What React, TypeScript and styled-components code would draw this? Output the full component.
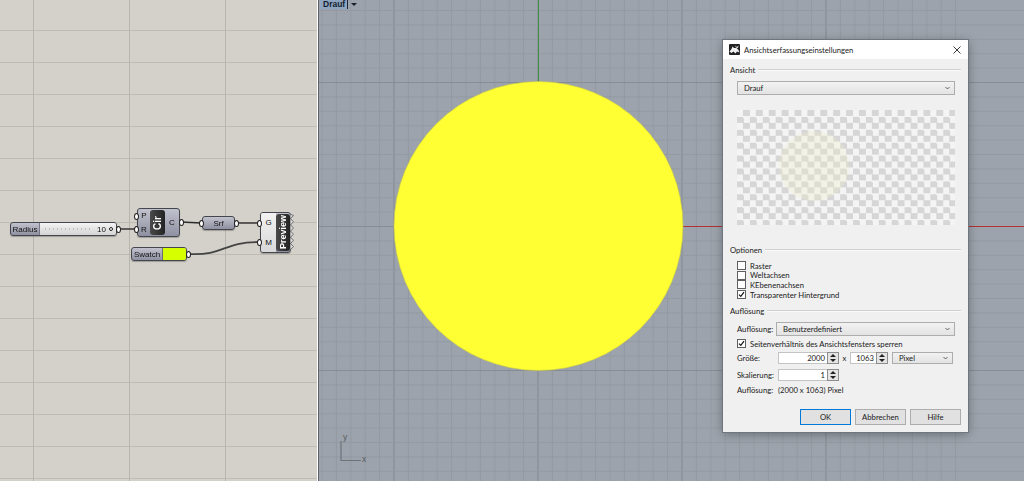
import React from 'react';
import styled, { createGlobalStyle } from 'styled-components';

const GlobalStyle = createGlobalStyle`
  html, body { margin: 0; padding: 0; width: 1024px; height: 481px; overflow: hidden; }
  body { font-family: Lato, "Liberation Sans", sans-serif; color: #1a1a1a; }
`;

const Page = styled.div`
  display: flex;
  width: 1024px;
  height: 481px;
  overflow: hidden;
  filter: blur(0.3px);
`;

/* ---------- grasshopper canvas ---------- */

const Canvas = styled.div`
  position: relative;
  flex: 0 0 317px;
  height: 481px;
  background-color: #d4d1ca;
  background-image:
    linear-gradient(90deg, #b7b5ad 1px, transparent 1px),
    linear-gradient(0deg, #bfbcb4 1px, transparent 1px);
  background-size: 96px 100%, 100% 32px;
  background-position: 33px 0, 0 -1px;
  border-right: 1px solid #ffffff;
  box-shadow: 1px 0 0 #5d6166;
  z-index: 1;
`;

const Wires = styled.svg`
  position: absolute;
  left: 0;
  top: 0;
  width: 317px;
  height: 481px;
`;

const Node = styled.div<{ $x: number; $y: number; $w: number; $h: number }>`
  position: absolute;
  left: ${p => p.$x}px;
  top: ${p => p.$y}px;
  width: ${p => p.$w}px;
  height: ${p => p.$h}px;
  box-sizing: border-box;
  display: flex;
  align-items: stretch;
  border: 1px solid #45464d;
  border-radius: 3px;
  background: linear-gradient(#c0c2cd, #8f91a2);
  box-shadow: 0 1px 1px rgba(0, 0, 0, 0.25);
  font: 8px "Liberation Sans", sans-serif;
  color: #111;
`;

const NodeLabel = styled.div<{ $w?: number }>`
  flex: ${p => (p.$w ? `0 0 ${p.$w}px` : '1')};
  display: flex;
  align-items: center;
  justify-content: center;
`;

const SliderTrack = styled.div`
  flex: 1;
  display: flex;
  align-items: center;
  justify-content: flex-end;
  gap: 3px;
  padding-right: 3px;
  border-left: 1px solid #77798a;
  border-radius: 0 2px 2px 0;
  background:
    repeating-linear-gradient(90deg, #bdbdbd 0 1px, transparent 1px 4px) 5px 5px / 48px 2px no-repeat,
    linear-gradient(#f4f4f4, #d4d4d4);
`;

const Grip = styled.span`
  width: 2px;
  height: 2px;
  border: 1px solid #222;
  border-radius: 50%;
  background: #fff;
`;

const SwatchFill = styled.div`
  flex: 1;
  background: #d6ff00;
  border-left: 1px solid #6f6f6f;
  border-radius: 0 2px 2px 0;
`;

const PortColumn = styled.div<{ $w: number; $light?: boolean }>`
  flex: 0 0 ${p => p.$w}px;
  display: flex;
  flex-direction: column;
  align-items: center;
  justify-content: space-around;
  border-radius: 2px 0 0 2px;
  background: ${p => (p.$light ? 'linear-gradient(#f2f2f2, #d8d8d8)' : 'transparent')};
`;

const Capsule = styled.div<{ $w: number }>`
  flex: 0 0 ${p => p.$w}px;
  margin: 1px 0;
  border-radius: 3px;
  background: linear-gradient(90deg, #4a4a4a, #232323);
  display: flex;
  align-items: center;
  justify-content: center;
`;

const CapsuleText = styled.span<{ $size: number }>`
  writing-mode: vertical-rl;
  transform: rotate(180deg);
  color: #fff;
  font: bold ${p => p.$size}px "Liberation Sans", sans-serif;
`;

const Zigzag = styled.svg`
  position: absolute;
  right: -4px;
  top: 1px;
  width: 4px;
  height: 37px;
`;

const Port = styled.span<{ $x: number; $y: number }>`
  position: absolute;
  left: ${p => p.$x - 2}px;
  top: ${p => p.$y - 3}px;
  width: 3px;
  height: 5px;
  border: 1px solid #222;
  border-radius: 50%;
  background: #fff;
`;

/* ---------- rhino viewport ---------- */

const Viewport = styled.div`
  position: relative;
  flex: 1;
  margin-left: 1px;
  height: 481px;
  background: #9ca3ac;
`;

const ViewportDrawing = styled.svg`
  display: block;
  width: 705px;
  height: 481px;
`;

const ViewTab = styled.div`
  position: absolute;
  left: 1px;
  top: 0;
  height: 9px;
  display: flex;
  align-items: center;
  font: bold 8.5px "Liberation Sans", sans-serif;
  color: #16202c;
`;

const ViewTabName = styled.span`
  width: 24px;
  height: 9px;
  line-height: 8px;
  padding-left: 3px;
  background: #8fa6c2;
  border-right: 1px solid #1d2530;
`;

const ViewTabArrow = styled.span`
  margin-left: 3px;
  border-left: 3px solid transparent;
  border-right: 3px solid transparent;
  border-top: 3px solid #16202c;
`;

/* ---------- dialog ---------- */

const Dialog = styled.div`
  position: absolute;
  left: 404px;
  top: 40px;
  width: 245px;
  height: 392px;
  box-sizing: border-box;
  display: flex;
  flex-direction: column;
  background: #f0f0f0;
  box-shadow: 0 0 0 1px #6f7680, 0 2px 10px rgba(0, 0, 0, 0.35);
  font-size: 7.7px;
  line-height: 10px;
`;

const TitleBar = styled.div`
  flex: 0 0 19px;
  display: flex;
  align-items: center;
  gap: 4px;
  padding: 0 7px 0 6px;
  background: #fff;
`;

const TitleText = styled.span`
  flex: 1;
`;

const Body = styled.div`
  flex: 1;
  display: flex;
  flex-direction: column;
  padding: 6px 7px 7px;
`;

const GroupHead = styled.div<{ $top?: number }>`
  display: flex;
  align-items: center;
  gap: 3px;
  height: 10px;
  margin-top: ${p => p.$top ?? 0}px;
  &::after {
    content: '';
    flex: 1;
    height: 1px;
    background: #d0d0d0;
    border-bottom: 1px solid #fafafa;
  }
`;

const Indented = styled.div<{ $top?: number }>`
  margin: ${p => p.$top ?? 0}px 6px 0 7px;
`;

const Select = styled.div<{ $h?: number; $w?: number; $left?: number }>`
  ${p => (p.$w ? `flex: 0 0 ${p.$w}px;` : 'flex: 1;')}
  height: ${p => p.$h ?? 14}px;
  margin-left: ${p => p.$left ?? 0}px;
  box-sizing: border-box;
  display: flex;
  align-items: center;
  justify-content: space-between;
  padding: 0 4px 0 6px;
  border: 1px solid #adadad;
  background: linear-gradient(#f2f2f2, #e3e3e3);
`;

const Preview = styled.div`
  position: relative;
  height: 115px;
  overflow: hidden;
  background-color: #f4f4f4;
  background-image: conic-gradient(
    #d6d6d6 25%,
    transparent 25% 50%,
    #d6d6d6 50% 75%,
    transparent 75%
  );
  background-size: 12.9px 12.9px;
`;

const PreviewCircle = styled.div`
  position: absolute;
  left: 42px;
  top: 21px;
  width: 70px;
  height: 70px;
  border-radius: 50%;
  background: rgba(238, 238, 200, 0.3);
`;

const CheckList = styled.div`
  display: flex;
  flex-direction: column;
`;

const CheckRow = styled.div<{ $h?: number }>`
  display: flex;
  align-items: center;
  gap: 4px;
  height: ${p => p.$h ?? 9.6}px;
`;

const Box = styled.span`
  flex: 0 0 9px;
  width: 9px;
  height: 9px;
  box-sizing: border-box;
  border: 1px solid #5f5f5f;
  background: #fff;
  display: flex;
`;

const FormRow = styled.div<{ $top?: number; $h?: number }>`
  display: flex;
  align-items: center;
  height: ${p => p.$h ?? 12}px;
  margin-top: ${p => p.$top ?? 0}px;
`;

const FormLabel = styled.span`
  flex: 0 0 41px;
`;

const NumberField = styled.div<{ $w: number }>`
  flex: 0 0 ${p => p.$w}px;
  height: 12px;
  box-sizing: border-box;
  display: flex;
  align-items: center;
  justify-content: flex-end;
  padding-right: 2px;
  border: 1px solid #c4c4c4;
  border-right: 0;
  background: #fff;
`;

const Spin = styled.div`
  flex: 0 0 12px;
  height: 12px;
  box-sizing: border-box;
  display: flex;
  flex-direction: column;
  justify-content: space-around;
  align-items: center;
  border: 1px solid #8d8d8d;
  background: #e4e4e4;
`;

const SpinArrow = styled.span<{ $down?: boolean }>`
  border-left: 3px solid transparent;
  border-right: 3px solid transparent;
  ${p => (p.$down ? 'border-top: 3px solid #222;' : 'border-bottom: 3px solid #222;')}
`;

const Times = styled.span`
  flex: 0 0 11px;
  text-align: center;
`;

const ButtonRow = styled.div`
  display: flex;
  justify-content: flex-end;
  gap: 4px;
  margin-top: auto;
`;

const Button = styled.div<{ $primary?: boolean }>`
  width: 51px;
  height: 16px;
  box-sizing: border-box;
  display: flex;
  align-items: center;
  justify-content: center;
  background: #e1e1e1;
  border: 1px solid ${p => (p.$primary ? '#0078d7' : '#adadad')};
`;

const Chevron = () => (
  <svg width='5' height='4' viewBox='0 0 5 4' fill='none' stroke='#555' strokeWidth='0.9'>
    <path d='M0.5 1L2.5 3L4.5 1' />
  </svg>
);

const Check = ({ on, label, h }: { on?: boolean; label: string; h?: number }) => (
  <CheckRow $h={h}>
    <Box>
      {on && (
        <svg width='7' height='7' viewBox='0 0 7 7' fill='none' stroke='#111' strokeWidth='1.2'>
          <path d='M1 3.6L2.8 5.4L6 1.2' />
        </svg>
      )}
    </Box>
    {label}
  </CheckRow>
);

const Spinner = () => (
  <Spin>
    <SpinArrow />
    <SpinArrow $down />
  </Spin>
);

const RhinoIcon = () => (
  <svg width='11' height='11' viewBox='0 0 11 11'>
    <rect width='11' height='11' rx='1' fill='#222' />
    <path d='M0.5 7.5L2.5 5L3.5 2.5L5 4L7.5 4L9.5 6L10.5 8.5L8 7.5L6.5 9.5L4.5 7.5L2.5 9Z' fill='#f2f2f2' />
    <path d='M6 1.5L8 3L9.5 1.5L9 4L7 3.5Z' fill='#f2f2f2' />
  </svg>
);

const minorX = Array.from({ length: 50 }, (_, i) => i);
const minorY = Array.from({ length: 34 }, (_, i) => i);
const zigzag = 'M0 0' + Array.from({ length: 12 }, (_, i) => ` L${i % 2 ? 0.5 : 3.5} ${(i + 0.5) * 3.1}`).join('') + ' L0 37 Z';

export default function App() {
  return (
    <Page>
      <GlobalStyle />
      <Canvas>
        <Wires viewBox='0 0 317 481' fill='none' stroke='#2b2b2b' strokeWidth='1.4'>
          <path d='M118 229L136 229' />
          <path d='M181 222L201 223' />
          <path d='M236 223L259 223' />
          <path d='M188 254C225 256 222 242 259 242' stroke='#444' strokeWidth='1.8' />
        </Wires>

        <Node $x={10} $y={222} $w={107} $h={14}>
          <NodeLabel $w={28}>Radius</NodeLabel>
          <SliderTrack>
            10
            <Grip />
          </SliderTrack>
        </Node>
        <Port $x={118} $y={229} />

        <Node $x={137} $y={208} $w={43} $h={29}>
          <PortColumn $w={12}>
            <span>P</span>
            <span>R</span>
          </PortColumn>
          <Capsule $w={15}>
            <CapsuleText $size={10}>Cir</CapsuleText>
          </Capsule>
          <NodeLabel>C</NodeLabel>
        </Node>
        <Port $x={136} $y={216} />
        <Port $x={136} $y={229} />
        <Port $x={181} $y={222} />

        <Node $x={202} $y={216} $w={33} $h={14}>
          <NodeLabel>Srf</NodeLabel>
        </Node>
        <Port $x={201} $y={223} />
        <Port $x={236} $y={223} />

        <Node $x={260} $y={212} $w={31} $h={41}>
          <PortColumn $w={15} $light>
            <span>G</span>
            <span>M</span>
          </PortColumn>
          <Capsule $w={14}>
            <CapsuleText $size={9}>Preview</CapsuleText>
          </Capsule>
          <Zigzag viewBox='0 0 4 37'>
            <path d={zigzag} fill='#d9d9d9' stroke='#45464d' strokeWidth='0.7' />
          </Zigzag>
        </Node>
        <Port $x={259} $y={223} />
        <Port $x={259} $y={242} />

        <Node $x={131} $y={247} $w={56} $h={14}>
          <NodeLabel $w={30}>Swatch</NodeLabel>
          <SwatchFill />
        </Node>
        <Port $x={188} $y={254} />
      </Canvas>

      <Viewport>
        <ViewportDrawing viewBox='319 0 705 481'>
          {minorX.map(i => {
            const x = 250 + i * 14.4;
            const major = i % 10 === 0;
            return <line key={i} x1={x} x2={x} y1={0} y2={481} stroke={major ? '#878d94' : '#939aa3'} strokeWidth={major ? 1.2 : 1} />;
          })}
          {minorY.map(i => {
            const y = 10.5 + i * 14.4;
            const major = i % 10 === 5;
            return <line key={i} x1={319} x2={1024} y1={y} y2={y} stroke={major ? '#878d94' : '#939aa3'} strokeWidth={major ? 1.2 : 1} />;
          })}
          <line x1={538.5} x2={538.5} y1={0} y2={226} stroke='#3f8f3f' />
          <line x1={538} x2={1024} y1={226.5} y2={226.5} stroke='#b03434' />
          <circle cx={538.5} cy={226} r={144.5} fill='#ffff33' stroke='#c9c94a' strokeWidth='0.6' />
          <path d='M341 441V460.5H361' fill='none' stroke='#6e7378' strokeWidth='1.2' />
          <text x={343} y={440} fontFamily='Liberation Sans' fontSize='8.5' fill='#575c61'>y</text>
          <text x={362} y={462} fontFamily='Liberation Sans' fontSize='8.5' fill='#575c61'>x</text>
        </ViewportDrawing>
        <ViewTab>
          <ViewTabName>Drauf</ViewTabName>
          <ViewTabArrow />
        </ViewTab>

        <Dialog>
          <TitleBar>
            <RhinoIcon />
            <TitleText>Ansichtserfassungseinstellungen</TitleText>
            <svg width='8' height='8' viewBox='0 0 8 8' stroke='#222' strokeWidth='0.9'>
              <path d='M0.5 0.5L7.5 7.5M7.5 0.5L0.5 7.5' />
            </svg>
          </TitleBar>
          <Body>
            <GroupHead>Ansicht</GroupHead>
            <Indented $top={6}>
              <Select>
                Drauf
                <Chevron />
              </Select>
            </Indented>
            <Indented $top={15}>
              <Preview>
                <PreviewCircle />
              </Preview>
            </Indented>

            <GroupHead $top={20}>Optionen</GroupHead>
            <Indented $top={6}>
              <CheckList>
                <Check label='Raster' />
                <Check label='Weltachsen' />
                <Check label='KEbenenachsen' />
                <Check on label='Transparenter Hintergrund' />
              </CheckList>
            </Indented>

            <GroupHead $top={7}>Auflösung</GroupHead>
            <Indented $top={6}>
              <FormRow $h={14}>
                <FormLabel>Auflösung:</FormLabel>
                <Select $left={-2}>
                  Benutzerdefiniert
                  <Chevron />
                </Select>
              </FormRow>
              <FormRow $top={1} $h={13}>
                <Check on h={13} label='Seitenverhältnis des Ansichtsfensters sperren' />
              </FormRow>
              <FormRow $top={2}>
                <FormLabel>Größe:</FormLabel>
                <NumberField $w={49}>2000</NumberField>
                <Spinner />
                <Times>x</Times>
                <NumberField $w={26}>1063</NumberField>
                <Spinner />
                <Select $h={12} $w={61} $left={4}>
                  Pixel
                  <Chevron />
                </Select>
              </FormRow>
              <FormRow $top={5}>
                <FormLabel>Skalierung:</FormLabel>
                <NumberField $w={49}>1</NumberField>
                <Spinner />
              </FormRow>
              <FormRow $top={3}>
                <FormLabel>Auflösung:</FormLabel>
                (2000 x 1063) Pixel
              </FormRow>
            </Indented>

            <ButtonRow>
              <Button $primary>OK</Button>
              <Button>Abbrechen</Button>
              <Button>Hilfe</Button>
            </ButtonRow>
          </Body>
        </Dialog>
      </Viewport>
    </Page>
  );
}
